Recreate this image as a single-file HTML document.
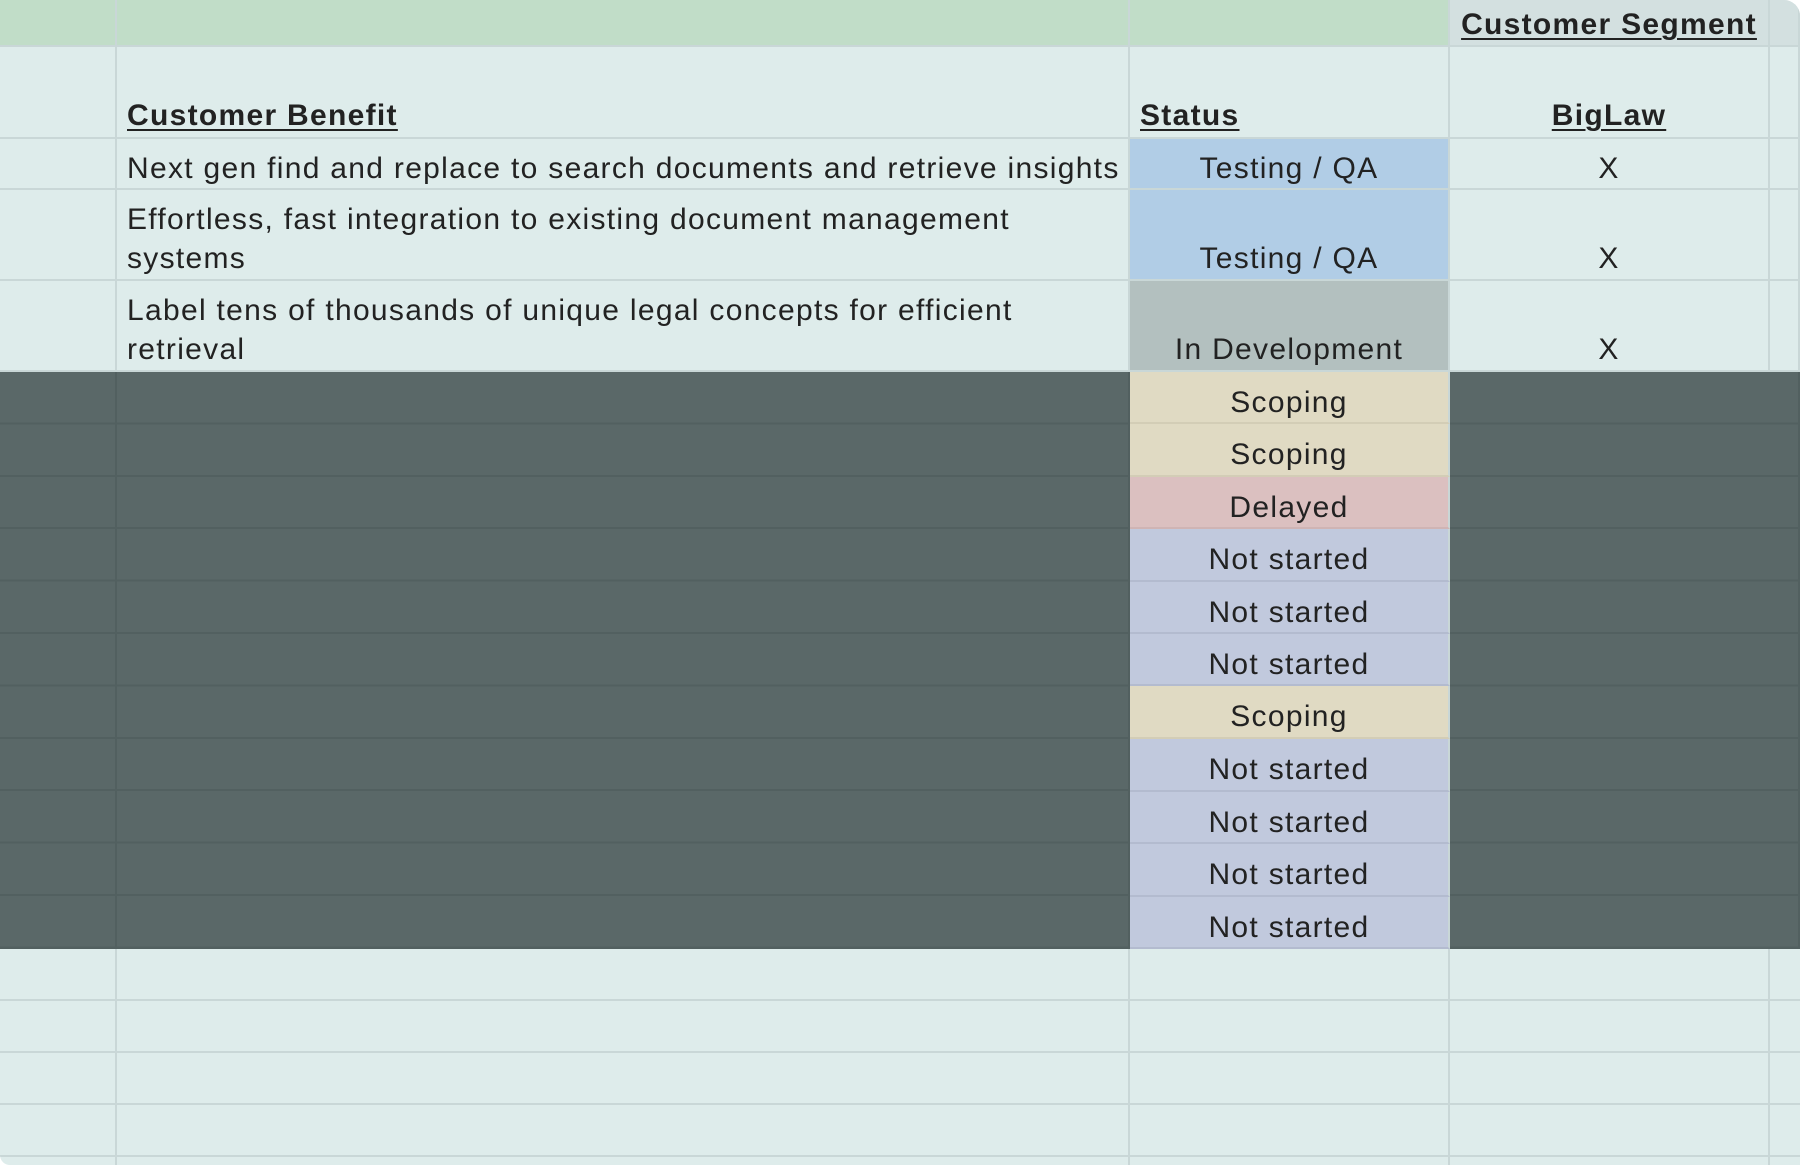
<!DOCTYPE html>
<html><head><meta charset="utf-8"><style>
*{margin:0;padding:0;box-sizing:border-box}
body{width:1800px;height:1169px;background:#fff;position:relative;overflow:hidden;font-family:"Liberation Sans",Arial,sans-serif;color:#222;}
#wrap{position:absolute;left:0;top:0;width:1800px;height:1165px;background:#deeceb;border-top-right-radius:16px;border-bottom-left-radius:10px;overflow:hidden}
.c{position:absolute;border-right:2px solid #c9d7d7;border-bottom:2px solid #c9d7d7;font-size:30px;letter-spacing:1.3px;line-height:39px;padding:0 10px;display:flex;align-items:flex-end;padding-bottom:1px;white-space:nowrap}
.ctr{justify-content:center}
.mid{align-items:center;padding-bottom:0;padding-top:10px}
.h{font-weight:bold;text-decoration:underline;text-decoration-thickness:2px;text-underline-offset:4px}
.g{background:#c1ddc8}
.b{background:#b1cde6}
.gr{background:#b3c0bf}
.d{background:#5a6868;border-right-color:#526060;border-bottom-color:#526060}
.s{background:#e0dac3;border-bottom-color:#d3cdb6}
.dl{background:#dbc0c0;border-bottom-color:#cfb4b4}
.n{background:#c1c9dd;border-bottom-color:#b3bbcf}
</style></head><body><div id="wrap">
<div class="c g" style="left:0;top:0;width:117px;height:47px"></div>
<div class="c g" style="left:117px;top:0;width:1013px;height:47px"></div>
<div class="c g" style="left:1130px;top:0;width:320px;height:47px"></div>
<div class="c h ctr" style="left:1450px;top:0;width:320px;height:47px;background:#d3e0e0;padding-bottom:1px">Customer Segment</div>
<div class="c" style="left:1770px;top:0;width:30px;height:47px;background:#d3e0e0"></div>
<div class="c" style="left:0;top:47px;width:117px;height:92px"></div>
<div class="c h" style="left:117px;top:47px;width:1013px;height:92px;padding-bottom:2px">Customer Benefit</div>
<div class="c h" style="left:1130px;top:47px;width:320px;height:92px;padding-bottom:2px">Status</div>
<div class="c h ctr" style="left:1450px;top:47px;width:320px;height:92px;padding-bottom:2px">BigLaw</div>
<div class="c" style="left:1770px;top:47px;width:30px;height:92px"></div>
<div class="c" style="left:0;top:139px;width:117px;height:51px"></div>
<div class="c" style="left:117px;top:139px;width:1013px;height:51px;padding-bottom:0px">Next gen find and replace to search documents and retrieve insights</div>
<div class="c b ctr" style="left:1130px;top:139px;width:320px;height:51px;padding-bottom:0px">Testing / QA</div>
<div class="c ctr" style="left:1450px;top:139px;width:320px;height:51px;padding-bottom:0px">X</div>
<div class="c" style="left:1770px;top:139px;width:30px;height:51px"></div>
<div class="c" style="left:0;top:190px;width:117px;height:91px"></div>
<div class="c" style="left:117px;top:190px;width:1013px;height:91px;white-space:normal;padding-right:60px">Effortless, fast integration to existing document management systems</div>
<div class="c b ctr" style="left:1130px;top:190px;width:320px;height:91px">Testing / QA</div>
<div class="c ctr" style="left:1450px;top:190px;width:320px;height:91px">X</div>
<div class="c" style="left:1770px;top:190px;width:30px;height:91px"></div>
<div class="c" style="left:0;top:281px;width:117px;height:91px"></div>
<div class="c" style="left:117px;top:281px;width:1013px;height:91px;white-space:normal;padding-right:60px">Label tens of thousands of unique legal concepts for efficient retrieval</div>
<div class="c gr ctr" style="left:1130px;top:281px;width:320px;height:91px">In Development</div>
<div class="c ctr" style="left:1450px;top:281px;width:320px;height:91px">X</div>
<div class="c" style="left:1770px;top:281px;width:30px;height:91px"></div>

<div class="c d" style="left:0;top:372px;width:117px;height:577px"></div>
<div class="c d" style="left:117px;top:372px;width:1013px;height:577px"></div>
<div class="c d" style="left:1450px;top:372px;width:350px;height:577px"></div>
<div style="position:absolute;left:0;top:372px;width:1130px;height:577px;background:repeating-linear-gradient(to bottom,transparent 0,transparent 50.4px,#526060 50.4px,#526060 52.4px)"></div>
<div style="position:absolute;left:1450px;top:372px;width:350px;height:577px;background:repeating-linear-gradient(to bottom,transparent 0,transparent 50.4px,#526060 50.4px,#526060 52.4px)"></div>
<div class="c s ctr mid" style="left:1130px;top:372px;width:320px;height:52px">Scoping</div>
<div class="c s ctr mid" style="left:1130px;top:424px;width:320px;height:53px">Scoping</div>
<div class="c dl ctr mid" style="left:1130px;top:477px;width:320px;height:52px">Delayed</div>
<div class="c n ctr mid" style="left:1130px;top:529px;width:320px;height:53px">Not started</div>
<div class="c n ctr mid" style="left:1130px;top:582px;width:320px;height:52px">Not started</div>
<div class="c n ctr mid" style="left:1130px;top:634px;width:320px;height:52px">Not started</div>
<div class="c s ctr mid" style="left:1130px;top:686px;width:320px;height:53px">Scoping</div>
<div class="c n ctr mid" style="left:1130px;top:739px;width:320px;height:53px">Not started</div>
<div class="c n ctr mid" style="left:1130px;top:792px;width:320px;height:52px">Not started</div>
<div class="c n ctr mid" style="left:1130px;top:844px;width:320px;height:53px">Not started</div>
<div class="c n ctr mid" style="left:1130px;top:897px;width:320px;height:52px">Not started</div>

<div style="position:absolute;left:0;top:949px;width:1800px;height:220px;background:
linear-gradient(to right,transparent 115px,#c9d7d7 115px,#c9d7d7 117px,transparent 117px,transparent 1128px,#c9d7d7 1128px,#c9d7d7 1130px,transparent 1130px,transparent 1448px,#c9d7d7 1448px,#c9d7d7 1450px,transparent 1450px,transparent 1768px,#c9d7d7 1768px,#c9d7d7 1770px,transparent 1770px),
repeating-linear-gradient(to bottom,transparent 0,transparent 50px,#c9d7d7 50px,#c9d7d7 52px)"></div>
</div></body></html>
